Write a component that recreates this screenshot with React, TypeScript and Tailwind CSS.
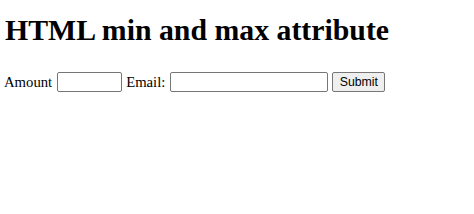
import React from 'react';

export default function App() {
  return (
    <div className="min-h-[214px] bg-white px-[4px] pt-[13px] text-black [font-family:'Liberation_Serif','Times_New_Roman',serif]">
      <h1 className="text-[29.8px] font-bold leading-[33px] ml-px">HTML min and max attribute</h1>

      <form className="mt-[26px] flex items-center text-[14.7px] leading-[19px]">
        <label htmlFor="amount">Amount</label>
        <input
          id="amount"
          type="number"
          min={1}
          max={10}
          className="ml-[5px] h-[20px] w-[65px] rounded-[2px] border border-[#767676] bg-white"
        />
        <label htmlFor="email" className="ml-[4px]">Email:</label>
        <input
          id="email"
          type="email"
          className="ml-[5px] h-[20px] w-[158px] rounded-[2px] border border-[#767676] bg-white"
        />
        <button
          type="button"
          className="ml-[4px] h-[20px] w-[53px] rounded-[2px] border border-[#767676] bg-[#efefef] text-[12.3px] [font-family:'Liberation_Sans',Arial,sans-serif]"
        >
          Submit
        </button>
      </form>
    </div>
  );
}
